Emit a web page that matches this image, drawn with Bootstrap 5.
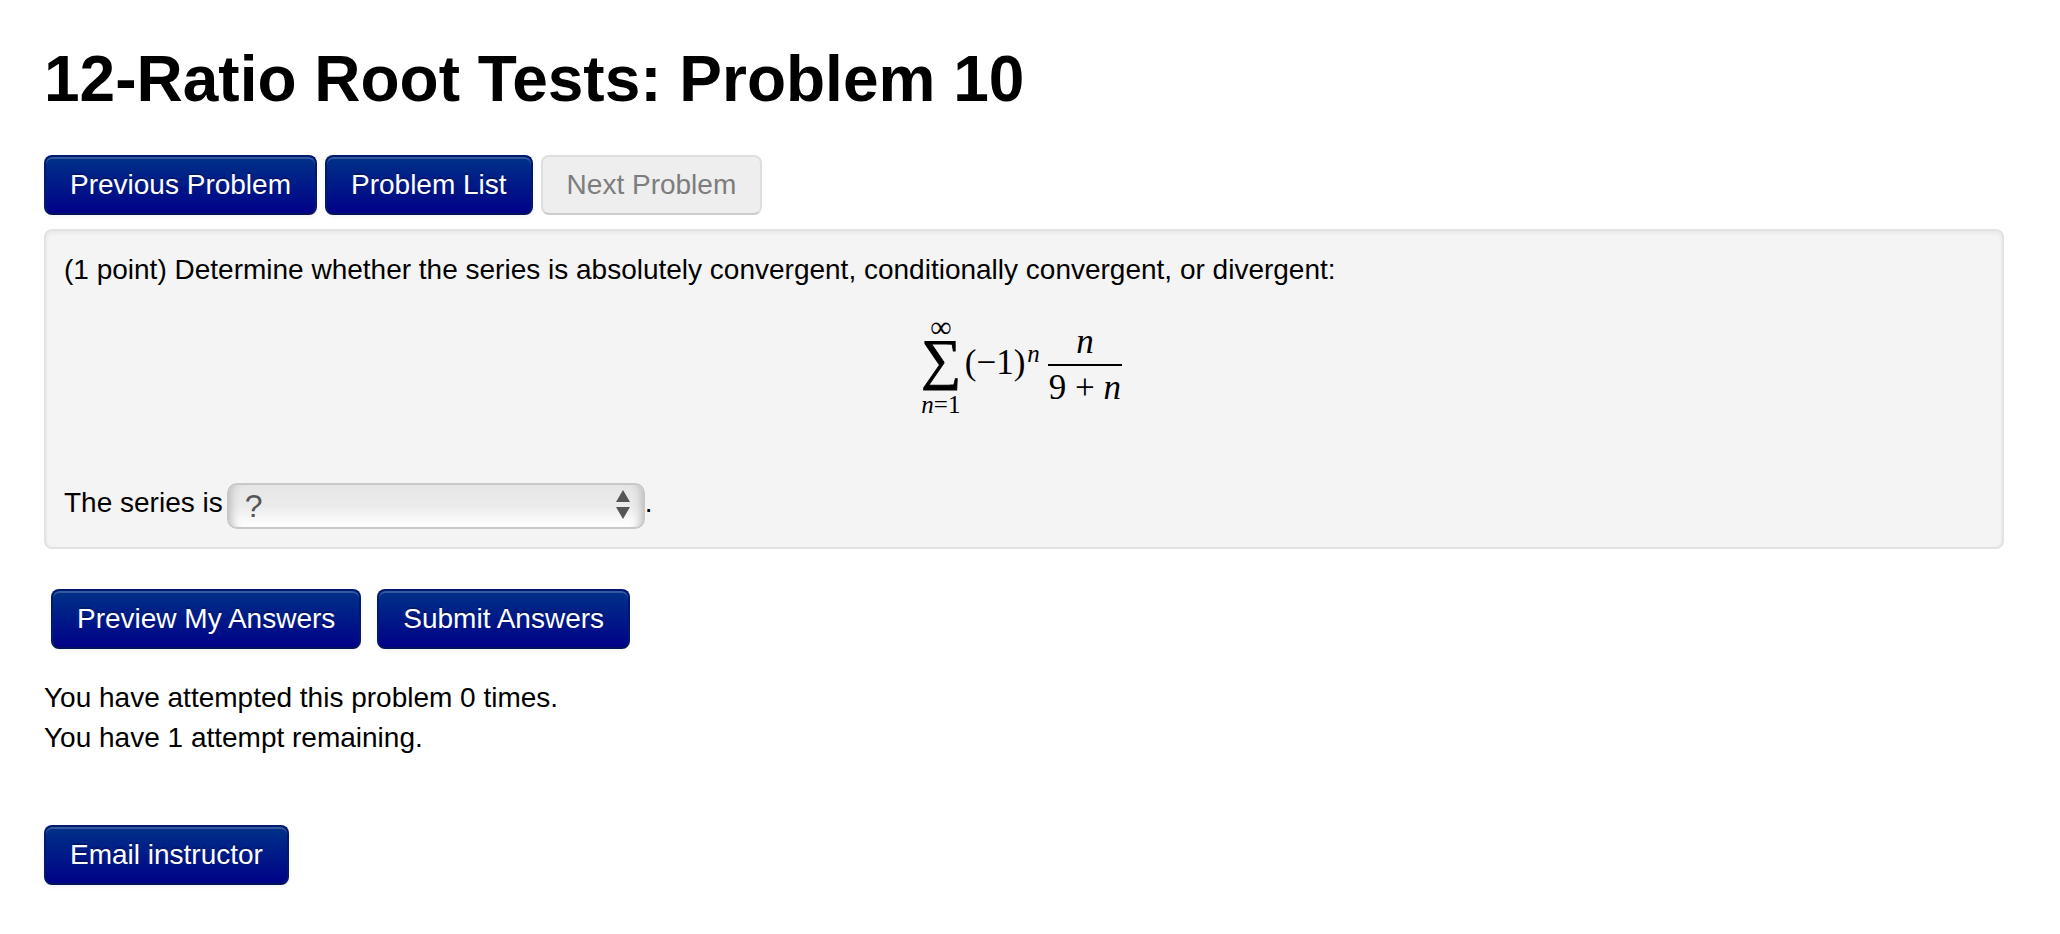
<!DOCTYPE html>
<html lang="en">
<head>
<meta charset="utf-8">
<meta name="viewport" content="width=device-width, initial-scale=1">
<title>12-Ratio Root Tests: Problem 10</title>
<link rel="stylesheet" href="https://cdn.jsdelivr.net/npm/bootstrap@5.3.0/dist/css/bootstrap.min.css">
<style>
  body { font-family: "Liberation Sans", Arial, sans-serif; font-size: 28px; line-height: 40px; color: #000; background: #fff; }
  main { padding: 39px 56px 48px 44px; }
  h1 { font-size: 64px; line-height: 80px; font-weight: 700; margin-bottom: 36px; }
  .btn { font-size: 28px; line-height: 40px; padding: 8px 24px; border-width: 2px; border-radius: 8px; }
  .btn-navy, .btn-navy:hover {
    color: #fff; border-color: #001a70 #001a70 #001258; background: linear-gradient(#003388, #000088) border-box;
    text-shadow: 0 -2px 0 rgba(0,0,0,.25);
    box-shadow: inset 0 2px 0 rgba(255,255,255,.2), 0 2px 4px rgba(0,0,0,.05);
  }
  .btn-off:disabled { color: #7d7d7d; background: #eee; border-color: #dedede #dedede #ccc; opacity: 1; }
  .well-box { background: #f4f4f4; border: 2px solid #e2e2e2; border-radius: 8px; padding: 19px 18px 18px; box-shadow: inset 0 2px 4px rgba(0,0,0,.06); margin-top: 14px; }
  .formula { font-family: "Liberation Serif", "Times New Roman", serif; font-size: 35px; line-height: 36px; margin: 25px 0 68px; padding-right: 5px; }
  .formula .limit { font-size: 25px; line-height: 20px; }
  .formula .upper { font-size: 30px; line-height: 24px; }
  .formula .lower { margin-top: 16px; }
  .formula .sigma { font-size: 56px; line-height: 40px; -webkit-text-stroke: 1px #000; }
  .formula .factor { padding-bottom: 4px; }
  .formula sup { font-size: 25px; top: -12px; margin-left: 2px; }
  .formula .over { border-bottom: 2px solid #000; padding: 0 1px 4px; }
  .formula .under { padding: 4px 1px 0; }
  .select-wrap { width: 418px; }
  .answer { appearance: none; width: 100%; height: 46px; font-size: 32px; line-height: 40px; padding: 0 16px; color: #555; border: 2px solid #c8c8c8; border-radius: 10px;
    background: linear-gradient(#e6e6e6, #ebebeb 50%, #fff); box-shadow: inset 10px 0 8px -8px #bbb, inset -10px 0 8px -8px #bbb; }
  .arrows { right: 15px; top: 7px; pointer-events: none; }
  .actions { margin-top: 40px; padding-left: 7px; }
  .attempts { margin: 29px 0 67px; }
</style>
</head>
<body>
<main>
  <h1>12-Ratio Root Tests: Problem 10</h1>
  <nav class="d-flex flex-wrap gap-2" aria-label="Problem navigation">
    <a class="btn btn-navy" href="#">Previous Problem</a>
    <a class="btn btn-navy" href="#">Problem List</a>
    <button class="btn btn-off" type="button" disabled>Next Problem</button>
  </nav>
  <form>
    <section class="well-box">
      <p class="m-0">(1 point) Determine whether the series is absolutely convergent, conditionally convergent, or divergent:</p>
      <div class="formula d-flex justify-content-center align-items-center">
        <div class="d-flex flex-column align-items-center">
          <span class="upper">∞</span>
          <span class="sigma">∑</span>
          <span class="limit lower"><i>n</i>=1</span>
        </div>
        <div class="factor ms-1">(−1)<sup><i>n</i></sup></div>
        <div class="text-center ms-2">
          <div class="over"><i>n</i></div>
          <div class="under">9 + <i>n</i></div>
        </div>
      </div>
      <div class="d-flex align-items-start">
        <label class="me-1" for="answer">The series is</label>
        <div class="select-wrap position-relative d-flex">
          <select class="answer" id="answer">
            <option>?</option>
            <option>absolutely convergent</option>
            <option>conditionally convergent</option>
            <option>divergent</option>
          </select>
          <svg class="arrows position-absolute" width="14" height="30" viewBox="0 0 14 30" fill="#555" aria-hidden="true"><path d="M7 0L14 12H0zM0 17H14L7 29z"/></svg>
        </div>
        <span>.</span>
      </div>
    </section>
    <div class="actions d-flex flex-wrap gap-3">
      <button class="btn btn-navy" type="button">Preview My Answers</button>
      <button class="btn btn-navy" type="button">Submit Answers</button>
    </div>
  </form>
  <p class="attempts">You have attempted this problem 0 times.<br>You have 1 attempt remaining.</p>
  <button class="btn btn-navy" type="button">Email instructor</button>
</main>
<script src="https://cdn.jsdelivr.net/npm/bootstrap@5.3.0/dist/js/bootstrap.bundle.min.js"></script>
</body>
</html>
